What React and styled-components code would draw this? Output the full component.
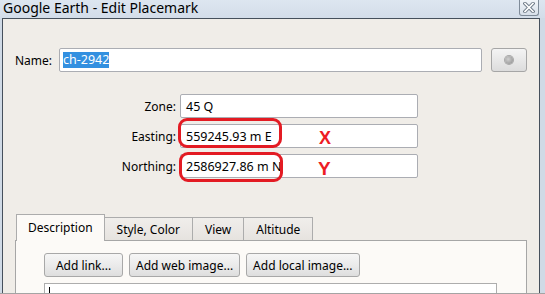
import React from 'react';
import styled, { createGlobalStyle } from 'styled-components';

const GlobalStyle = createGlobalStyle`
  html, body {
    margin: 0;
    padding: 0;
    overflow: hidden;
  }
  body {
    font-family: "Noto Sans", "DejaVu Sans", sans-serif;
    font-size: 12px;
    color: #000;
  }
`;

const Window = styled.div`
  width: 545px;
  height: 294px;
  box-sizing: border-box;
  display: flex;
  flex-direction: column;
  padding: 0 5px 0 2px;
  background: #d0dae6;
  border-bottom: 1px solid #a4a4a4;
  overflow: hidden;
`;

const TitleBar = styled.div`
  height: 18px;
  display: flex;
  justify-content: space-between;
  align-items: flex-start;
  background: linear-gradient(#dde6f0, #d3dde9);
  margin: 0 -5px 0 -2px;
  padding: 0 6px 0 3px;
`;

const Title = styled.div`
  font-size: 14px;
  line-height: 15px;
  white-space: nowrap;
`;

const CloseButton = styled.div`
  width: 20px;
  height: 16px;
  box-sizing: border-box;
  border: 1px solid #7f8b99;
  border-top: none;
  border-radius: 0 0 3px 3px;
  background: linear-gradient(#f2f5f9, #d8e0ea);
  display: flex;
  align-items: center;
  justify-content: center;
`;

const Client = styled.div`
  flex: 1;
  display: flex;
  flex-direction: column;
  background: #f0ede8;
  border: 1px solid #46505c;
  border-bottom: none;
  padding: 0 12px;
  min-height: 0;
`;

const NameRow = styled.div`
  margin-top: 29px;
  height: 24px;
  display: flex;
  align-items: center;
`;

const Label = styled.span`
  white-space: nowrap;
  justify-self: end;
  align-self: center;
  margin-right: ${p => p.$gap || 0}px;
`;

const TextBox = styled.div`
  box-sizing: border-box;
  height: 24px;
  flex: ${p => (p.$grow ? 1 : 'none')};
  background: #fff;
  border: 1px solid #abadb3;
  border-radius: 2px;
  display: flex;
  align-items: center;
  padding-left: ${p => p.$pad || 5}px;
  font-size: 12.5px;
  white-space: nowrap;
`;

const Selected = styled.span`
  background: #3390e0;
  color: #fff;
  line-height: 16px;
`;

const DotButton = styled.div`
  width: 36px;
  height: 24px;
  box-sizing: border-box;
  margin-left: 9px;
  border: 1px solid #a6a6a6;
  border-radius: 3px;
  background: linear-gradient(#f4f4f4, #e8e8e8 50%, #dcdcdc);
  display: flex;
  align-items: center;
  justify-content: center;
`;

const Dot = styled.span`
  width: 8px;
  height: 8px;
  border-radius: 50%;
  background: radial-gradient(circle at 40% 40%, #cfcfcf, #8c8c8c);
  box-shadow: 0 0 0 1px #a8a8a8;
`;

const CoordGrid = styled.div`
  margin-top: 22px;
  display: grid;
  grid-template-columns: 161px 238px;
  column-gap: 4px;
  row-gap: 6px;
`;

const Field = styled.div`
  position: relative;
`;

const Ring = styled.div`
  position: absolute;
  left: ${p => p.$left}px;
  top: ${p => p.$top}px;
  width: 104px;
  height: 30px;
  box-sizing: border-box;
  border: 3px solid #e31b23;
  border-radius: 9px;
  pointer-events: none;
`;

const Mark = styled.span`
  position: absolute;
  left: ${p => p.$left}px;
  top: ${p => p.$top}px;
  font-family: "Liberation Sans", Arial, sans-serif;
  font-weight: bold;
  font-size: ${p => p.$size}px;
  line-height: ${p => p.$size}px;
  color: #ed1c24;
`;

const TabSection = styled.div`
  margin-top: 36px;
  flex: 1;
  display: flex;
  flex-direction: column;
  min-height: 0;
`;

const TabStrip = styled.div`
  display: flex;
  align-items: flex-end;
  height: 27px;
  padding-left: 1px;
  margin-bottom: -1px;
  position: relative;
  z-index: 1;
`;

const Tab = styled.div`
  box-sizing: border-box;
  height: ${p => (p.$active ? 27 : 23)}px;
  margin-bottom: ${p => (p.$active ? 0 : 1)}px;
  margin-left: ${p => (p.$first ? 0 : -1)}px;
  padding: ${p => (p.$active ? '0 11px 2px' : '0 12px')};
  display: flex;
  align-items: center;
  border: 1px solid #acacac;
  border-bottom: none;
  background: ${p => (p.$active ? '#fcfaf7' : 'linear-gradient(#f0eeeb, #e6e3df)')};
  position: relative;
  z-index: ${p => (p.$active ? 2 : 1)};
  white-space: nowrap;
`;

const Panel = styled.div`
  flex: 1;
  background: #fcfaf7;
  border: 1px solid #a6a6a6;
  border-bottom: none;
  padding: 12px 29px 0 28px;
`;

const ButtonRow = styled.div`
  display: flex;
  gap: 6px;
`;

const Button = styled.div`
  box-sizing: border-box;
  height: 24px;
  min-width: 79px;
  padding: 0 6px;
  display: flex;
  align-items: center;
  justify-content: center;
  border: 1px solid #a8a8a8;
  border-radius: 3px;
  background: linear-gradient(#f6f6f6, #ebebeb 50%, #dedede);
  white-space: nowrap;
`;

const Editor = styled.div`
  margin-top: 6px;
  height: 30px;
  background: #fff;
  border: 1px solid #adadad;
`;

const Caret = styled.span`
  display: block;
  width: 1px;
  height: 12px;
  margin: 3px 0 0 4px;
  background: #000;
`;

const CloseGlyph = () => (
  <svg width="12" height="11" viewBox="0 0 12 11">
    <path d="M2 1.5 L10 9.5 M10 1.5 L2 9.5" stroke="#6c7886" strokeWidth="3.4" strokeLinecap="square" />
    <path d="M2 1.5 L10 9.5 M10 1.5 L2 9.5" stroke="#ffffff" strokeWidth="1.6" strokeLinecap="square" />
  </svg>
);

const tabs = ['Description', 'Style, Color', 'View', 'Altitude'];
const buttons = ['Add link...', 'Add web image...', 'Add local image...'];

const App = () => (
  <>
    <GlobalStyle />
    <Window>
      <TitleBar>
        <Title>Google Earth - Edit Placemark</Title>
        <CloseButton>
          <CloseGlyph />
        </CloseButton>
      </TitleBar>
      <Client>
        <NameRow>
          <Label $gap={7}>Name:</Label>
          <TextBox $grow $pad={3}>
            <Selected>ch-2942</Selected>
          </TextBox>
          <DotButton>
            <Dot />
          </DotButton>
        </NameRow>

        <CoordGrid>
          <Label>Zone:</Label>
          <TextBox>45 Q</TextBox>

          <Label>Easting:</Label>
          <Field>
            <TextBox>559245.93 m E</TextBox>
            <Ring $left={-2} $top={-6} />
            <Mark $left={139} $top={5} $size={18}>X</Mark>
          </Field>

          <Label>Northing:</Label>
          <Field>
            <TextBox>2586927.86 m N</TextBox>
            <Ring $left={-1} $top={-2} />
            <Mark $left={138} $top={5} $size={19}>Y</Mark>
          </Field>
        </CoordGrid>

        <TabSection>
          <TabStrip>
            {tabs.map((t, i) => (
              <Tab key={t} $active={i === 0} $first={i === 0}>
                {t}
              </Tab>
            ))}
          </TabStrip>
          <Panel>
            <ButtonRow>
              {buttons.map(b => (
                <Button key={b}>{b}</Button>
              ))}
            </ButtonRow>
            <Editor>
              <Caret />
            </Editor>
          </Panel>
        </TabSection>
      </Client>
    </Window>
  </>
);

export default App;
